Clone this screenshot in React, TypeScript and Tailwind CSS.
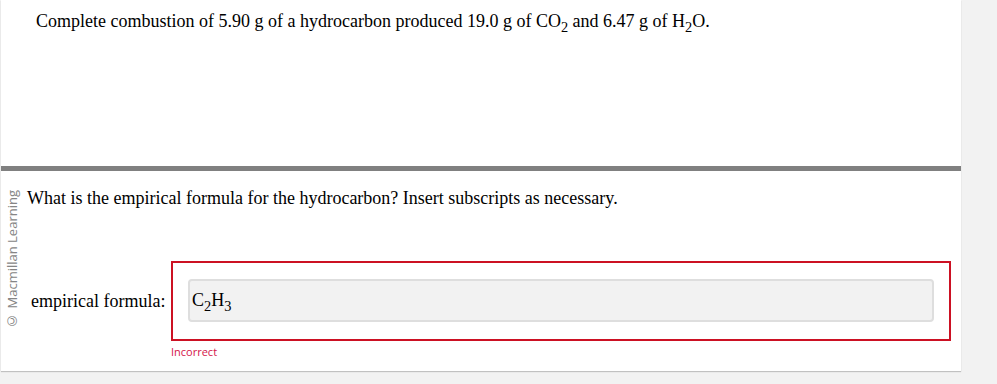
import React from 'react';

const serif = "font-['Liberation_Serif','Times_New_Roman',serif]";

const Sub = ({ children }: { children: React.ReactNode }) => (
  <sub className="relative top-[5px] align-baseline text-[0.8em] leading-none">{children}</sub>
);

const App = () => {
  return (
    <div className="flex h-[384px] w-[997px] bg-[#f2f2f2]">
      <div className="ml-[1px] flex h-[371px] w-[960px] flex-col bg-white shadow-[0_1px_1px_rgba(0,0,0,0.2)]">
        <div className={`h-[166px] pl-[35px] pt-[8px] text-[18px] text-black ${serif}`}>
          Complete combustion of 5.90 g of a hydrocarbon produced 19.0 g of CO<Sub>2</Sub> and 6.47 g of H<Sub>2</Sub>O.
        </div>
        <div className="h-[5px] bg-[#808080]" />
        <div className="flex flex-1">
          <div className="flex w-[24px] items-end justify-center pb-[41px]">
            <span className="whitespace-nowrap text-[13px] text-[#858585] [writing-mode:vertical-rl] rotate-180 font-['Open_Sans','Liberation_Sans',sans-serif]">
              © Macmillan Learning
            </span>
          </div>
          <div className="flex-1">
            <p className={`mt-[14px] pl-[2px] text-[18px] text-black ${serif}`}>
              What is the empirical formula for the hydrocarbon? Insert subscripts as necessary.
            </p>
            <div className="mt-[49px] flex items-start">
              <div className={`w-[146px] pl-[6px] pt-[27px] text-[18px] text-black ${serif}`}>empirical formula:</div>
              <div>
                <div className="w-[780px] border-2 border-[#cc1123] px-[15px] pt-[16px] pb-[17px]">
                  <div className={`flex h-[43px] items-center rounded-[4px] border-2 border-[#dedede] bg-[#f2f2f2] px-[2px] text-[18px] text-black ${serif}`}>
                    <span>
                      C<Sub>2</Sub>H<Sub>3</Sub>
                    </span>
                  </div>
                </div>
                <div className="mt-[3px] text-[11px] text-[#d4144a] font-['Open_Sans','Liberation_Sans',sans-serif]">Incorrect</div>
              </div>
            </div>
          </div>
        </div>
      </div>
    </div>
  );
};

export default App;
